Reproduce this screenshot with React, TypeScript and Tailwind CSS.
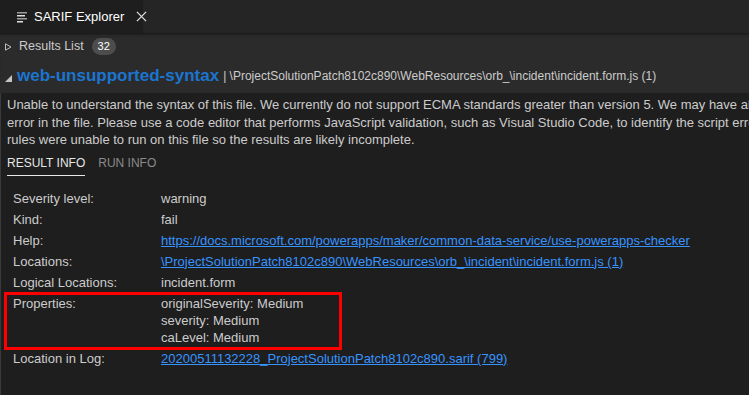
import React from "react";

type Row = {
    label: string;
    values: string[];
    link?: boolean;
    boxed?: boolean;
};

const rows: Row[] = [
    { label: "Severity level:", values: ["warning"] },
    { label: "Kind:", values: ["fail"] },
    { label: "Help:", values: ["https://docs.microsoft.com/powerapps/maker/common-data-service/use-powerapps-checker"], link: true },
    { label: "Locations:", values: ["\\ProjectSolutionPatch8102c890\\WebResources\\orb_\\incident\\incident.form.js (1)"], link: true },
    { label: "Logical Locations:", values: ["incident.form"] },
    { label: "Properties:", values: ["originalSeverity: Medium", "severity: Medium", "caLevel: Medium"], boxed: true },
    { label: "Location in Log:", values: ["20200511132228_ProjectSolutionPatch8102c890.sarif (799)"], link: true },
];

function PreviewIcon() {
    return (
        <svg width="12" height="12" viewBox="0 0 12 12" className="shrink-0">
            <rect x="0" y="1" width="10" height="1.5" fill="#9d9d9d" />
            <rect x="0" y="4" width="8" height="1.5" fill="#e0e0e0" />
            <rect x="0" y="7" width="10" height="1.5" fill="#9d9d9d" />
            <rect x="0" y="10" width="6" height="1.5" fill="#e0e0e0" />
        </svg>
    );
}

export default function App() {
    return (
        <div className="w-[749px] h-[395px] overflow-hidden bg-[#1e1e1e] text-[#cccccc] font-['Liberation_Sans',Arial,sans-serif] text-[12.5px] flex flex-col">
            {/* editor tabs */}
            <div className="h-[33px] bg-[#252526] flex shrink-0">
                <div className="w-[143px] bg-[#1e1e1e] flex items-center pl-[17px] gap-[5px] whitespace-nowrap">
                    <PreviewIcon />
                    <span className="text-white text-[13px]">SARIF Explorer</span>
                    <svg width="11" height="11" viewBox="0 0 12 12" className="ml-[7px] shrink-0">
                        <path d="M1 1 L11 11 M11 1 L1 11" stroke="#e0e0e0" strokeWidth="1.4" />
                    </svg>
                </div>
            </div>

            {/* results list + result header */}
            <div className="bg-[#2b2b2b] shadow-[inset_0_3px_3px_-2px_#141414] shrink-0">
                <div className="h-[26px] flex items-center pl-[5px] whitespace-nowrap">
                    <svg width="7" height="8" viewBox="0 0 7 8" className="mr-[7px] mt-[1px]">
                        <path d="M0.5 0.8 L6 4 L0.5 7.2 Z" fill="none" stroke="#bdbdbd" strokeWidth="1" />
                    </svg>
                    <span className="text-[12.5px]">Results List</span>
                    <span className="ml-[8px] h-[17px] px-[6px] rounded-full bg-[#4d4d4d] text-[11px] text-white flex items-center">32</span>
                </div>
                <div className="h-[34px] flex items-center pl-[5px] whitespace-nowrap">
                    <svg width="8" height="8" viewBox="0 0 8 8" className="mr-[4px] mt-[5px]">
                        <path d="M7 0 L7 7 L0 7 Z" fill="#c5c5c5" />
                    </svg>
                    <span className="text-[#1b75d0] font-bold text-[17px]">web-unsupported-syntax</span>
                    <span className="ml-[4px] text-[12px]">| \ProjectSolutionPatch8102c890\WebResources\orb_\incident\incident.form.js (1)</span>
                </div>
            </div>

            {/* body */}
            <div className="flex-1 border-l border-[#3a3a3a]">
                <div className="pl-[6px] pt-[3px] leading-[17.5px] text-[13px] whitespace-nowrap overflow-hidden">
                    <div>Unable to understand the syntax of this file. We currently do not support ECMA standards greater than version 5. We may have already identified an</div>
                    <div>error in the file. Please use a code editor that performs JavaScript validation, such as Visual Studio Code, to identify the script errors. Some</div>
                    <div>rules were unable to run on this file so the results are likely incomplete.</div>
                </div>

                <div className="flex gap-[13px] pl-[6px] pt-[7px] text-[12px]">
                    <span className="text-[#e7e7e7] leading-[14px] pb-[5px] border-b border-[#e7e7e7]">RESULT INFO</span>
                    <span className="text-[#8b8b8b] leading-[14px]">RUN INFO</span>
                </div>

                <div className="pl-[12px] pt-[12px] flex flex-col text-[13px]">
                    {rows.map((r) => (
                        <div key={r.label} className="relative flex py-[2px] leading-[17px] whitespace-nowrap">
                            {r.boxed && (
                                <div className="absolute left-[-9px] top-[-1px] w-[338px] h-[58px] border-[3px] border-[#ff0000]" />
                            )}
                            <div className="w-[148px] shrink-0">{r.label}</div>
                            <div className="flex flex-col">
                                {r.values.map((v) => (
                                    <span key={v} className={r.link ? "text-[#3794ff] underline" : ""}>{v}</span>
                                ))}
                            </div>
                        </div>
                    ))}
                </div>
            </div>
        </div>
    );
}
